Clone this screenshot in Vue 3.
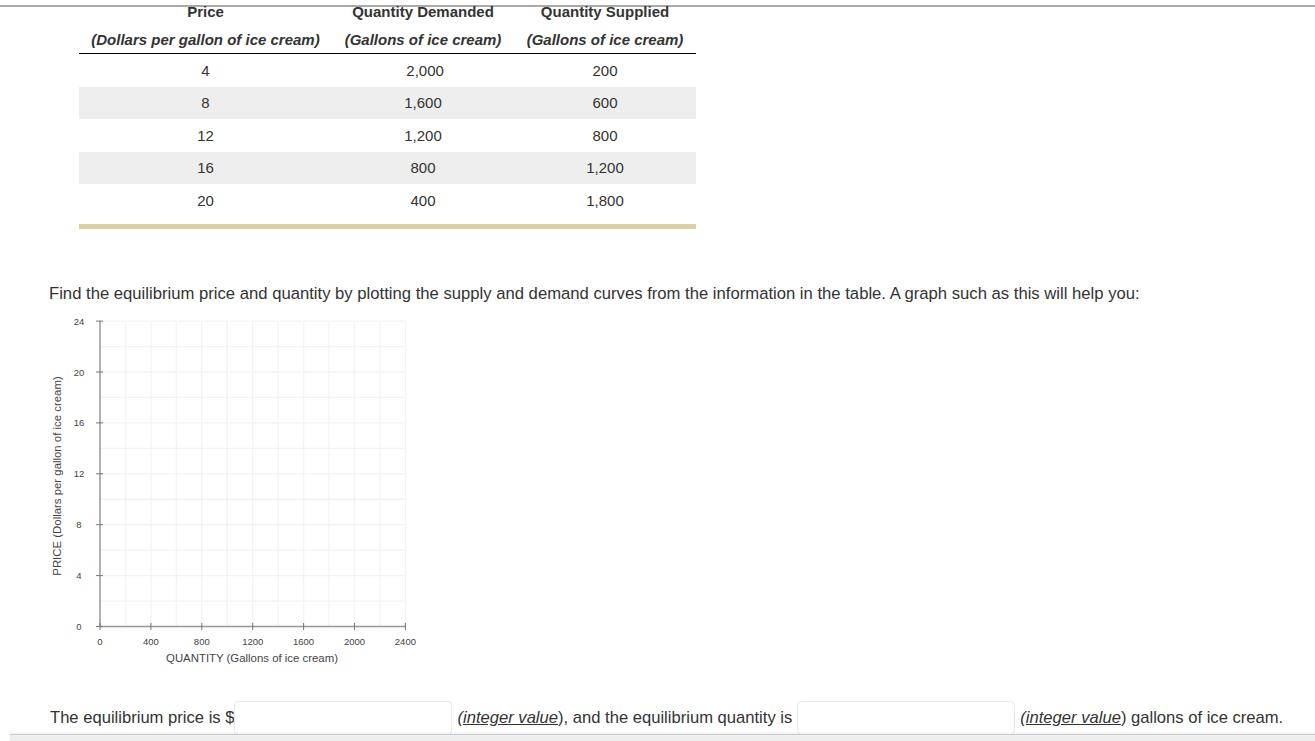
<script setup>
// 表格資料
const rows = [
  ['4', '\u00a02,000', '200'],
  ['8', '1,600', '600'],
  ['12', '1,200', '800'],
  ['16', '800', '1,200'],
  ['20', '400', '1,800'],
];

// 圖表座標 (svg 左上角在頁面 30,310)
const x0 = 70;
const y0 = 316.5;
const stepX = 25.45;
const stepY = 25.45;

const gridX = Array.from({ length: 13 }, (_, i) => x0 + i * stepX);
const gridY = Array.from({ length: 13 }, (_, i) => y0 - i * stepY);
const ticksX = [0, 400, 800, 1200, 1600, 2000, 2400].map((v, i) => ({ v, x: x0 + i * 2 * stepX }));
const ticksY = [0, 4, 8, 12, 16, 20, 24].map((v, i) => ({ v, y: y0 - i * 2 * stepY }));
</script>

<template>
  <div class="page">
    <div class="topLine"></div>

    <table class="dataTable">
      <thead>
        <tr class="head1">
          <th class="col1">Price</th>
          <th class="col2">Quantity Demanded</th>
          <th class="col3">Quantity Supplied</th>
        </tr>
        <tr class="head2">
          <th>(Dollars per gallon of ice cream)</th>
          <th>(Gallons of ice cream)</th>
          <th>(Gallons of ice cream)</th>
        </tr>
      </thead>
      <tbody>
        <tr v-for="(row, index) in rows" :key="index" :class="{ stripe: index % 2 === 1 }">
          <td v-for="cell in row" :key="cell">{{ cell }}</td>
        </tr>
      </tbody>
    </table>
    <div class="goldBar"></div>

    <p class="question">Find the equilibrium price and quantity by plotting the supply and demand curves from the information in the table. A graph such as this will help you:</p>

    <svg class="chart" width="440" height="360" viewBox="0 0 440 360">
      <!-- 格線 -->
      <line v-for="x in gridX" :key="'gx' + x" :x1="x" :x2="x" :y1="gridY[12]" :y2="y0" class="grid" />
      <line v-for="y in gridY" :key="'gy' + y" :x1="x0" :x2="gridX[12]" :y1="y" :y2="y" class="grid" />
      <!-- 座標軸 -->
      <line :x1="x0" :x2="x0" :y1="gridY[12]" :y2="y0" class="axis" />
      <line :x1="x0" :x2="gridX[12]" :y1="y0" :y2="y0" class="axis" />
      <!-- 刻度 -->
      <g v-for="t in ticksY" :key="'ty' + t.v">
        <line :x1="x0 - 4" :x2="x0 + 3" :y1="t.y" :y2="t.y" class="tick" />
        <text :x="49" :y="t.y + 3.5" class="tickText">{{ t.v }}</text>
      </g>
      <g v-for="t in ticksX" :key="'tx' + t.v">
        <line :x1="t.x" :x2="t.x" :y1="y0 - 3.5" :y2="y0 + 3.5" class="tick" />
        <text :x="t.x" :y="334.5" class="tickText">{{ t.v }}</text>
      </g>
      <text x="222" y="352" class="axisLabel">QUANTITY (Gallons of ice cream)</text>
      <text class="axisLabel" transform="translate(31 166) rotate(-90)">PRICE (Dollars per gallon of ice cream)</text>
    </svg>

    <div class="answerRow">
      <span>The equilibrium price is $</span>
      <input class="answerBox" type="text">
      <span class="hint">(<u>integer value</u></span><span>), and the equilibrium quantity is</span>
      <input class="answerBox box2" type="text">
      <span class="hint">(<u>integer value</u></span><span>) gallons of ice cream.</span>
    </div>

    <div class="bottomBar"></div>
  </div>
</template>

<style scoped>
.page {
  position: relative;
  width: 1315px;
  height: 741px;
  overflow: hidden;
  background: #fff;
  color: #333;
  font-family: "Liberation Sans", Arial, sans-serif;
}
.topLine {
  height: 1.5px;
  margin-top: 5px;
  background-color: #aaa;
}
/* 表格 */
.dataTable {
  border-collapse: collapse;
  table-layout: fixed;
  width: 617px;
  margin-left: 79px;
  font-size: 15px;
}
.col1 {
  width: 253px;
}
.col2 {
  width: 182px;
}
.dataTable th {
  padding: 0;
  font-weight: bold;
}
.head1 th {
  height: 19.5px;
  line-height: 9px;
  vertical-align: top;
}
.head2 th {
  height: 27px;
  font-style: italic;
  border-bottom: 1px solid #000;
}
.dataTable td {
  height: 32.5px;
  padding: 0;
  text-align: center;
}
.stripe td {
  background-color: #eee;
}
.goldBar {
  width: 617px;
  height: 5px;
  margin: 7px 0 0 79px;
  background-color: #dbcfa3;
}
/* 題目 */
.question {
  margin: 56px 0 0 49px;
  font-size: 16.66px;
  line-height: 18px;
  white-space: nowrap;
}
.chart {
  display: block;
  margin: 7px 0 0 30px;
}
.grid {
  stroke: #f3f3f3;
  stroke-width: 1.3;
}
.axis {
  stroke: #999;
  stroke-width: 1.5;
}
.tick {
  stroke: #777;
  stroke-width: 1;
}
.tickText {
  font-size: 9.5px;
  fill: #444;
  text-anchor: middle;
}
.axisLabel {
  font-size: 11.4px;
  fill: #444;
  text-anchor: middle;
}
/* 答案列 */
.answerRow {
  display: flex;
  align-items: center;
  margin: 32px 0 0 50px;
  height: 33px;
  font-size: 16.6px;
  white-space: pre;
}
.answerBox {
  box-sizing: border-box;
  width: 218px;
  height: 34px;
  margin: 0 5px 0 0;
  padding: 0;
  border: 1px solid #e8e8e8;
  border-radius: 4px;
  background: #fff;
  outline: none;
}
.box2 {
  margin-left: 5px;
}
.hint {
  font-style: italic;
}
.bottomBar {
  position: absolute;
  left: 10px;
  right: 0;
  bottom: 0;
  height: 6px;
  background-color: #eee;
  border-top: 1px solid #ccc;
  box-shadow: 0 -1px 2px rgba(0, 0, 0, 0.08);
}
</style>

<style>
body {
  margin: 0;
}
</style>
